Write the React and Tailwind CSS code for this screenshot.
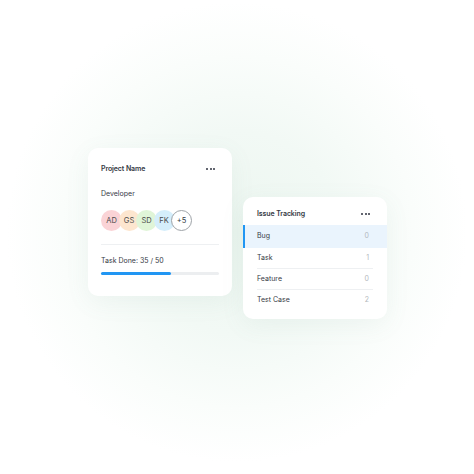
import React from 'react';

const avatars = [
    { label: 'AD', cls: 'bg-[#fad3d6] text-[#4a4a4a]' },
    { label: 'GS', cls: 'bg-[#fde6cf] text-[#4a4a4a]' },
    { label: 'SD', cls: 'bg-[#e0f5d8] text-[#4a4a4a]' },
    { label: 'FK', cls: 'bg-[#d5eefb] text-[#4a4a4a]' },
];

const issues = [
    { name: 'Task', count: 1 },
    { name: 'Feature', count: 0 },
    { name: 'Test Case', count: 2 },
];

function Dots() {
    return (
        <div className="flex gap-[1.5px]">
            <span className="w-[2px] h-[2px] rounded-full bg-[#2f3340]"></span>
            <span className="w-[2px] h-[2px] rounded-full bg-[#2f3340]"></span>
            <span className="w-[2px] h-[2px] rounded-full bg-[#2f3340]"></span>
        </div>
    );
}

export default function App() {
    return (
        <div
            className="w-[474px] h-[474px] flex items-start gap-[11px] pt-[148px] pl-[88px] text-[#353944] bg-[radial-gradient(circle_at_50%_49%,#ecf6f0_0%,#f2f9f5_30%,#fafdfb_52%,#ffffff_68%)]"
            style={{ fontFamily: 'Inter, "Noto Sans", sans-serif' }}
        >
            {/* Project card */}
            <div className="w-[144px] h-[148px] bg-white rounded-[10px] shadow-[0_6px_24px_rgba(120,150,135,0.08)] px-[13px] pt-[16px]">
                <div className="flex items-center justify-between h-[10px] pr-[4px]">
                    <span className="text-[7px] font-semibold tracking-[-0.1px]">Project Name</span>
                    <Dots />
                </div>
                <div className="mt-[15px] text-[7px] leading-[10px]">Developer</div>
                <div className="mt-[11px] flex">
                    {avatars.map((a, i) => (
                        <div key={a.label} className={`w-[21px] h-[21px] rounded-full flex items-center justify-center text-[7.5px] ${a.cls} ${i ? '-ml-[3.5px]' : ''}`}>
                            {a.label}
                        </div>
                    ))}
                    <div className="w-[21px] h-[21px] -ml-[3.5px] rounded-full bg-white border border-[#9ea3a8] flex items-center justify-center text-[7.5px] text-[#353944]">
                        +5
                    </div>
                </div>
                <div className="mt-[13px] h-px bg-[#eef0f2]"></div>
                <div className="mt-[11px] text-[7px] leading-[10px]">Task Done: 35 / 50</div>
                <div className="mt-[6px] h-[3px] bg-[#eceef0] rounded-full flex">
                    <div className="w-[70px] h-full bg-[#2196f3] rounded-full"></div>
                </div>
            </div>

            {/* Issue tracking card */}
            <div className="mt-[49px] w-[144px] h-[122px] bg-white rounded-[10px] shadow-[0_6px_24px_rgba(120,150,135,0.08)] pt-[12px] overflow-hidden">
                <div className="flex items-center justify-between h-[10px] pl-[14px] pr-[17px]">
                    <span className="text-[7px] font-semibold tracking-[-0.1px]">Issue Tracking</span>
                    <Dots />
                </div>
                <div className="mt-[6px] h-[23px] bg-[#eaf4fd] border-l-2 border-[#2196f3] flex items-center justify-between pl-[12px] pr-[18px] text-[7px]">
                    <span>Bug</span>
                    <span className="text-[#b4b8bd]">0</span>
                </div>
                <div className="px-[14px]">
                    {issues.map((it, i) => (
                        <div key={it.name} className={`h-[21px] flex items-center justify-between pr-[4px] text-[7px] ${i < issues.length - 1 ? 'border-b border-[#eef0f2]' : ''}`}>
                            <span>{it.name}</span>
                            <span className="text-[#b4b8bd]">{it.count}</span>
                        </div>
                    ))}
                </div>
            </div>
        </div>
    );
}
